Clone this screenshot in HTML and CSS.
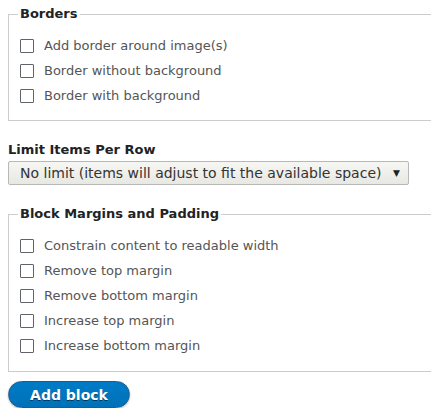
FILE: index.html
```html
<!DOCTYPE html>
<html>
<head>
<meta charset="utf-8">
<link rel="stylesheet" href="styles.css">
</head>
<body>
<div class="page">
  <fieldset class="group">
    <legend class="legend">Borders</legend>
    <div class="options">
      <label class="option"><span class="box"></span>Add border around image(s)</label>
      <label class="option"><span class="box"></span>Border without background</label>
      <label class="option"><span class="box"></span>Border with background</label>
    </div>
  </fieldset>

  <div class="field">
    <div class="field-label">Limit Items Per Row</div>
    <div class="select">
      <span class="select-text">No limit (items will adjust to fit the available space)</span>
      <span class="arrow">▼</span>
    </div>
  </div>

  <fieldset class="group group-2">
    <legend class="legend">Block Margins and Padding</legend>
    <div class="options">
      <label class="option"><span class="box"></span>Constrain content to readable width</label>
      <label class="option"><span class="box"></span>Remove top margin</label>
      <label class="option"><span class="box"></span>Remove bottom margin</label>
      <label class="option"><span class="box"></span>Increase top margin</label>
      <label class="option"><span class="box"></span>Increase bottom margin</label>
    </div>
  </fieldset>

  <div class="actions">
    <button class="btn">Add block</button>
  </div>
</div>
</body>
</html>
```

FILE: styles.css
```css
html, body {
  margin: 0;
  padding: 0;
  background: #fff;
}
body {
  font-family: "DejaVu Sans", sans-serif;
  font-size: 13px;
  color: #333;
  overflow: hidden;
}
.page {
  padding: 7px 0 0 8px;
  width: 460px;
}
.group {
  margin: 0;
  border: 1px solid #ccc;
  padding: 0 10px 12px 11px;
}
.legend {
  font-weight: bold;
  color: #222;
  padding: 0 2px;
  margin-left: -2px;
  line-height: 14px;
}
.options {
  display: flex;
  flex-direction: column;
  padding-top: 12px;
}
.option {
  display: flex;
  align-items: center;
  height: 25px;
  color: #555;
}
.box {
  width: 12px;
  height: 12px;
  border: 1px solid #5f636b;
  border-radius: 1px;
  margin-right: 10px;
  flex: none;
}
.field {
  margin-top: 21px;
}
.field-label {
  font-weight: bold;
  color: #222;
  line-height: 15px;
}
.select {
  margin-top: 4px;
  width: 401px;
  height: 24px;
  box-sizing: border-box;
  border: 1px solid #b8b8b8;
  border-radius: 2px;
  background: linear-gradient(#f6f6f3, #e8e8e3);
  display: flex;
  align-items: center;
  justify-content: space-between;
  padding: 0 8px 0 11px;
  color: #333;
  font-size: 14px;
}
.arrow {
  font-size: 9px;
  color: #222;
}
.group-2 {
  margin-top: 22px;
  padding-bottom: 13px;
}
.actions {
  margin-top: 9px;
}
.btn {
  font-family: "DejaVu Sans", sans-serif;
  font-size: 14px;
  font-weight: bold;
  color: #fff;
  width: 122px;
  height: 27px;
  border: 1px solid #1e5c90;
  border-radius: 20px;
  background: linear-gradient(#007bc6, #0071b8);
  text-shadow: 0 1px rgba(0,0,0,0.5);
  padding: 0;
  box-shadow: 0 1px 2px rgba(0,0,0,0.25);
}
```
